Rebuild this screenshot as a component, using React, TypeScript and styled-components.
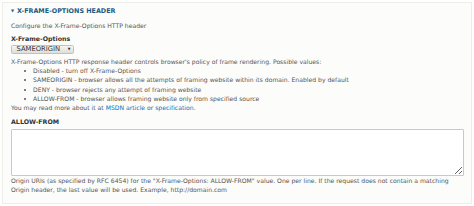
import styled, { createGlobalStyle } from "styled-components";

const GlobalStyle = createGlobalStyle`
  html, body {
    margin: 0;
    padding: 0;
    background: #ffffff;
  }
  body {
    font-family: "DejaVu Sans", Verdana, sans-serif;
    color: #333333;
  }
`;

const textColor = "#333333";
const mutedColor = "#555555";
const linkColor = "#0074bd";

const Fieldset = styled.section`
  display: flex;
  flex-direction: column;
  align-items: flex-start;
  margin: 2px 0 0 2px;
  width: 470px;
  height: 202px;
  box-sizing: border-box;
  border: 1px solid #eeeee9;
  background: #fcfcfa;
  padding: 3.5px 0 0 8px;
`;

const Summary = styled.div`
  display: flex;
  align-items: center;
  gap: 3px;
  height: 9px;
  line-height: 9px;
  font-size: 6.4px;
  font-weight: bold;
  text-transform: uppercase;
  color: #1d5a86;
`;

const Arrow = styled.span`
  font-size: 4px;
  line-height: 1;
`;

const Label = styled.div<{ $gap: number }>`
  margin-top: ${(p) => p.$gap}px;
  font-size: 6.3px;
  line-height: 9px;
  font-weight: bold;
  color: ${textColor};
`;

const SelectBox = styled.div`
  margin-top: 2px;
  display: flex;
  align-items: center;
  justify-content: space-between;
  width: 63px;
  height: 9.5px;
  box-sizing: border-box;
  padding: 0 2.5px 0 4.5px;
  border: 1px solid #c2c2ba;
  border-radius: 1.5px;
  background: linear-gradient(#f5f5f2, #dfdfd9);
  font-size: 6.8px;
  line-height: 1;
  color: ${textColor};
`;

const Caret = styled.span`
  font-size: 3.5px;
`;

const Description = styled.div<{ $gap: number; $line: number }>`
  margin-top: ${(p) => p.$gap}px;
  font-size: 6.1px;
  line-height: ${(p) => p.$line}px;
  color: ${mutedColor};
  white-space: nowrap;
`;

const List = styled.ul`
  margin: 0;
  padding: 0 0 0 13px;
  list-style: disc inside;
`;

const Link = styled.a`
  color: ${linkColor};
  text-decoration: none;
`;

const TextArea = styled.textarea`
  display: block;
  margin: 2.5px 0 0 0;
  width: 453px;
  height: 47px;
  box-sizing: border-box;
  border: 1px solid #cacac4;
  border-radius: 1px;
  background: #ffffff;
  padding: 2px 4px;
  font-family: inherit;
  font-size: 6px;
`;

export default function App() {
  return (
    <>
      <GlobalStyle />
      <Fieldset>
        <Summary>
          <Arrow>▼</Arrow>
          X-Frame-Options header
        </Summary>
        <Description $gap={5} $line={9}>
          Configure the X-Frame-Options HTTP header
        </Description>
        <Label $gap={4}>X-Frame-Options</Label>
        <SelectBox>
          SAMEORIGIN <Caret>▼</Caret>
        </SelectBox>
        <Description $gap={3.3} $line={9.1}>
          X-Frame-Options HTTP response header controls browser's policy of frame rendering. Possible values:
          <List>
            <li>Disabled - turn off X-Frame-Options</li>
            <li>SAMEORIGIN - browser allows all the attempts of framing website within its domain. Enabled by default</li>
            <li>DENY - browser rejects any attempt of framing website</li>
            <li>ALLOW-FROM - browser allows framing website only from specified source</li>
          </List>
          You may read more about it at <Link href="#">MSDN article</Link> or{" "}
          <Link href="#">specification</Link>.
        </Description>
        <Label $gap={5.5}>ALLOW-FROM</Label>
        <TextArea />
        <Description $gap={1.5} $line={8.8}>
          Origin URIs (as specified by RFC 6454) for the "X-Frame-Options: ALLOW-FROM" value. One per line. If the
          request does not contain a matching
          <br />
          Origin header, the last value will be used. Example, http://domain.com
        </Description>
      </Fieldset>
    </>
  );
}
